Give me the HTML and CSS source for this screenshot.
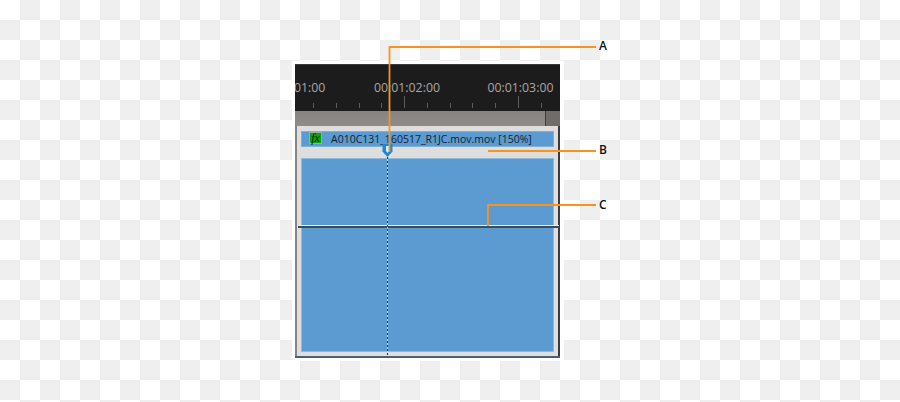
FILE: index.html
```html
<!DOCTYPE html>
<html lang="en">
<head>
<meta charset="utf-8">
<title>Timeline clip</title>
<link rel="stylesheet" href="styles.css">
</head>
<body>
<main class="stage">
  <div class="halo">
    <section class="panel">
      <header class="ruler">
        <div class="times">
          <span class="time time-first">01:00</span>
          <span class="time time-second">00:01:02:00</span>
          <span class="time time-third">00:01:03:00</span>
        </div>
        <div class="ticks">
          <i class="tick"></i><i class="tick"></i><i class="tick"></i><i class="tick"></i>
          <i class="tick major"></i>
          <i class="tick"></i><i class="tick"></i><i class="tick"></i><i class="tick"></i>
          <i class="tick major"></i>
          <i class="tick"></i>
        </div>
      </header>
      <div class="strip"><div class="strip-end"></div></div>
      <div class="tracks">
        <div class="clip">
          <span class="fx">fx</span>
          <span class="clip-name">A010C131_160517_R1JC.mov.mov [150%]</span>
        </div>
        <div class="video"></div>
      </div>
    </section>
  </div>

  <div class="divider"></div>
  <div class="playhead"></div>
  <svg class="marker" width="11" height="13" viewBox="0 0 11 13" aria-hidden="true">
    <path d="M0.5 0H10.5V7.5L5.5 13L0.5 7.5Z" fill="#1b86dc"/>
    <path d="M4 2H7V7L5.5 9L4 7Z" fill="#d8ebfa"/>
  </svg>

  <svg class="callouts" width="900" height="402" viewBox="0 0 900 402" aria-hidden="true">
    <path d="M389.5 152V47H596" />
    <path d="M488 151H596" />
    <path d="M488 226V205H596" />
  </svg>
  <span class="label label-a">A</span>
  <span class="label label-b">B</span>
  <span class="label label-c">C</span>
</main>
</body>
</html>
```
FILE: styles.css
```css
* {
  box-sizing: border-box;
}

html,
body {
  margin: 0;
  height: 402px;
  overflow: hidden;
}

.stage {
  position: relative;
  width: 900px;
  height: 402px;
  padding: 61px 0 0 292px;
  background-color: #fff;
  background-image: conic-gradient(#efefef 25%, #fff 0 50%, #efefef 0 75%, #fff 0);
  background-size: 40px 40px;
  font-family: "Open Sans", "Liberation Sans", sans-serif;
}

.halo {
  width: 272px;
  height: 300px;
  padding: 3px 4px 3px 3px;
  background: #fff;
}

.panel {
  display: flex;
  flex-direction: column;
  width: 265px;
  height: 294px;
  overflow: hidden;
  border-bottom: 2px solid #4b6072;
}

.ruler {
  display: flex;
  flex-direction: column;
  height: 47px;
  padding-top: 15px;
  background: #1d1c1c;
  border-top: 1px solid #3a3a3a;
}

.times {
  display: flex;
  height: 16px;
  font-size: 12.3px;
  line-height: 16px;
  color: #a9a7a5;
  white-space: nowrap;
}

.time-first {
  margin-left: -1px;
  width: 80px;
}

.time-second {
  width: 113.5px;
}

.ticks {
  display: flex;
  align-items: flex-end;
  gap: 21.75px;
  height: 12px;
  padding-left: 18px;
}

.tick {
  display: block;
  width: 1px;
  height: 5px;
  background: #5c5c5c;
}

.tick.major {
  height: 12px;
}

.strip {
  display: flex;
  justify-content: flex-end;
  height: 15px;
  background: linear-gradient(#868381, #8f8c8a);
}

.strip-end {
  width: 15px;
  background: #6f6c6a;
  border-left: 1px solid #3f3e3d;
}

.tracks {
  display: flex;
  flex: 1;
  flex-direction: column;
  gap: 11px;
  padding: 5px 4px 4px;
  background: #dedede;
  border-left: 2px solid #858585;
  border-right: 2px solid #3c3c3c;
}

.clip {
  display: flex;
  align-items: center;
  gap: 9px;
  height: 16px;
  padding-left: 8px;
  background: #5b9bd1;
  box-shadow: inset 0 0 0 1px #7fb0d8;
}

.fx {
  flex: none;
  width: 13px;
  height: 12px;
  margin-top: -2px;
  font-family: "Liberation Serif", serif;
  font-size: 12px;
  font-style: italic;
  line-height: 10px;
  text-align: center;
  color: #062006;
  background: #0ba30b;
  border: 1px solid #9aaf9a;
}

.clip-name {
  font-size: 10.5px;
  line-height: 12px;
  color: #16222e;
  white-space: nowrap;
}

.video {
  flex: 1;
  background: #5b9bd1;
  box-shadow: inset 0 0 0 1px #8fbadc;
}

.divider {
  position: absolute;
  left: 298px;
  top: 225px;
  width: 261px;
  height: 3px;
  background: linear-gradient(#e9ecee 0 1px, #8d969d 1px 1.5px, #3d4c59 1.5px);
}

.playhead {
  position: absolute;
  left: 386.5px;
  top: 157px;
  width: 1.5px;
  height: 198px;
  background-image: repeating-linear-gradient(#163a5c 0 2px, #cfdbe6 2px 4px);
}

.marker {
  position: absolute;
  left: 382px;
  top: 144px;
}

.callouts {
  position: absolute;
  left: 0;
  top: 0;
}

.callouts path {
  fill: none;
  stroke: #f7941d;
  stroke-width: 1.8;
}

.label {
  position: absolute;
  left: 599px;
  font-size: 12px;
  font-weight: 600;
  line-height: 14px;
  color: #111;
}

.label-a {
  top: 39px;
}

.label-b {
  top: 143px;
}

.label-c {
  top: 198px;
}
```
